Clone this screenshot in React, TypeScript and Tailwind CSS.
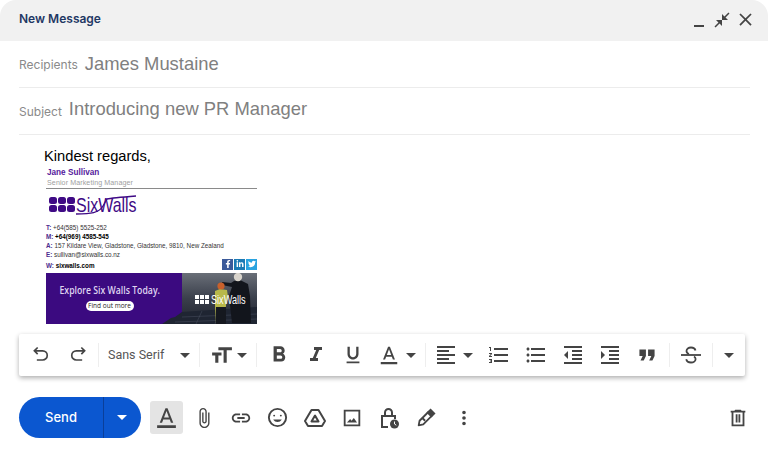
import React from 'react';
import { FaFacebookF, FaLinkedinIn, FaTwitter } from 'react-icons/fa';

const paths = {
  bold: 'M15.6 10.79c.97-.67 1.65-1.77 1.65-2.79 0-2.26-1.75-4-4-4H7v14h7.04c2.09 0 3.71-1.7 3.71-3.79 0-1.52-.86-2.82-2.15-3.42zM10 6.5h3c.83 0 1.5.67 1.5 1.5s-.67 1.5-1.5 1.5h-3v-3zm3.5 9H10v-3h3.5c.83 0 1.5.67 1.5 1.5s-.67 1.5-1.5 1.5z',
  italic: 'M10 4v3h2.21l-3.42 8H6v3h8v-3h-2.21l3.42-8H18V4z',
  underline: 'M12 17c3.31 0 6-2.69 6-6V3h-2.5v8c0 1.93-1.57 3.5-3.5 3.5S8.5 12.93 8.5 11V3H6v8c0 3.31 2.69 6 6 6zm-7 2v2h14v-2H5z',
  color: 'M11 3L5.5 17h2.25l1.12-3h6.25l1.12 3h2.25L13 3h-2zm-1.38 9L12 5.67 14.38 12H9.62zM3 19.5h18V22H3z',
  size: 'M9 4v3h5v12h3V7h5V4H9zm-6 8h3v7h3v-7h3V9H3v3z',
  align: 'M15 15H3v2h12v-2zm0-8H3v2h12V7zM3 13h18v-2H3v2zm0 8h18v-2H3v2zM3 3v2h18V3H3z',
  numbered: 'M2 17h2v.5H3v1h1v.5H2v1h3v-4H2v1zm1-9h1V4H2v1h1v3zm-1 3h1.8L2 13.1v.9h3v-1H3.2L5 10.9V10H2v1zm5-6v2h14V5H7zm0 14h14v-2H7v2zm0-6h14v-2H7v2z',
  bullets: 'M4 10.5c-.83 0-1.5.67-1.5 1.5s.67 1.5 1.5 1.5 1.5-.67 1.5-1.5-.67-1.5-1.5-1.5zm0-6c-.83 0-1.5.67-1.5 1.5S3.17 7.5 4 7.5 5.5 6.83 5.5 6 4.83 4.5 4 4.5zm0 12c-.83 0-1.5.68-1.5 1.5s.68 1.5 1.5 1.5 1.5-.68 1.5-1.5-.67-1.5-1.5-1.5zM7 19h14v-2H7v2zm0-6h14v-2H7v2zm0-8v2h14V5H7z',
  outdent: 'M11 17h10v-2H11v2zm-8-5l4 4V8l-4 4zm0 9h18v-2H3v2zM3 3v2h18V3H3zm8 6h10V7H11v2zm0 4h10v-2H11v2z',
  indent: 'M3 21h18v-2H3v2zM3 8v8l4-4-4-4zm8 9h10v-2H11v2zM3 3v2h18V3H3zm8 6h10V7H11v2zm0 4h10v-2H11v2z',
  quote: 'M6 17h3l2-4V7H5v6h3zm8 0h3l2-4V7h-6v6h3z',
  clip: 'M16.5 6v11.5c0 2.21-1.79 4-4 4s-4-1.79-4-4V5c0-1.38 1.12-2.5 2.5-2.5s2.5 1.12 2.5 2.5v10.5c0 .55-.45 1-1 1s-1-.45-1-1V6H10v9.5c0 1.38 1.12 2.5 2.5 2.5s2.5-1.12 2.5-2.5V5c0-2.21-1.79-4-4-4S7 2.79 7 5v12.5c0 3.04 2.46 5.5 5.5 5.5s5.5-2.46 5.5-5.5V6h-1.5z',
  link: 'M3.9 12c0-1.71 1.39-3.1 3.1-3.1h4V7H7c-2.76 0-5 2.24-5 5s2.24 5 5 5h4v-1.9H7c-1.71 0-3.1-1.39-3.1-3.1zM8 13h8v-2H8v2zm9-6h-4v1.9h4c1.71 0 3.1 1.39 3.1 3.1s-1.39 3.1-3.1 3.1h-4V17h4c2.76 0 5-2.24 5-5s-2.24-5-5-5z',
  close: 'M19 6.41L17.59 5 12 10.59 6.41 5 5 6.41 10.59 12 5 17.59 6.41 19 12 13.41 17.59 19 19 17.59 13.41 12z',
  collapse: 'M22 3.41l-5.29 5.29L20 12h-8V4l3.29 3.29L20.59 2 22 3.41zM3.41 22l5.29-5.29L12 20v-8H4l3.29 3.29L2 20.59 3.41 22z',
  image: 'M19 5v14H5V5h14m2-2H3v18h18V3zM6.5 17h11l-3.5-5-2.5 3-1.5-2z',
  more: 'M12 8a2 2 0 1 0 0-4 2 2 0 0 0 0 4zm0 2a2 2 0 1 0 0 4 2 2 0 0 0 0-4zm0 6a2 2 0 1 0 0 4 2 2 0 0 0 0-4z',
  trash: 'M15 3H9l-1 1H4v2h1v15h14V6h1V4h-4l-1-1zM7 6h10v13H7V6zm2.5 2v9h2V8h-2zm3 0v9h2V8h-2z',
};

const Icon = ({ d, size = 24 }: { d: string; size?: number }) => (
  <svg width={size} height={size} viewBox="0 0 24 24" fill="currentColor">
    <path d={d} />
  </svg>
);

const Line = ({ size = 24, children }: { size?: number; children: React.ReactNode }) => (
  <svg width={size} height={size} viewBox="0 0 24 24" fill="none" stroke="currentColor" strokeWidth="2">
    {children}
  </svg>
);

const Caret = () => (
  <div className="w-[10px] flex justify-center">
    <div className="w-0 h-0 border-x-[5px] border-x-transparent border-t-[5px] border-t-[#444]" />
  </div>
);

const Divider = ({ className }: { className: string }) => (
  <div className={`w-px h-[24px] bg-[#eeeeee] ${className}`} />
);

const Tool = ({ children, className = 'w-[37px]' }: { children: React.ReactNode; className?: string }) => (
  <div className={`${className} flex justify-center items-center text-[#444]`}>{children}</div>
);

const Field = ({ label, value, gap, valueClass = '' }: { label: string; value: string; gap: string; valueClass?: string }) => (
  <div className={`h-[47px] mx-[19px] w-[731px] border-b border-[#ececec] flex items-center ${gap}`}>
    <span className="text-[12px] text-[#8a8a8a] mt-[2px] font-['Inter',sans-serif]">{label}</span>
    <span className={`text-[18.4px] text-[#808080] font-['Liberation_Sans',sans-serif] ${valueClass}`}>{value}</span>
  </div>
);

const Contact = ({ k, v, bold, className = '' }: { k: string; v: string; bold?: boolean; className?: string }) => (
  <div className={`h-[9px] leading-[9px] text-[6.3px] text-[#333] ${className}`}>
    <b className="text-[#4b2a8c]">{k}</b> <span className={bold ? 'font-bold text-black' : ''}>{v}</span>
  </div>
);

const Dots = ({ dot, gap, className }: { dot: string; gap: string; className: string }) => (
  <div className={`grid grid-cols-3 ${gap}`}>
    {[0, 1, 2, 3, 4, 5].map((i) => (
      <div key={i} className={`${dot} ${className}`} />
    ))}
  </div>
);

const Signature = () => (
  <div className="ml-[46px] w-[211px] font-['Liberation_Sans',sans-serif]">
    <div className="text-[8.2px] leading-[10px] font-bold text-[#55209c] mt-[3px] pl-px">Jane Sullivan</div>
    <div className="text-[7.1px] leading-[10px] text-[#a0a0a0] tracking-[0.1px] pl-px">Senior Marketing Manager</div>
    <div className="h-px bg-[#8a8a8a]" />
    <div className="relative h-[29px] flex items-center gap-[1px] pl-[3px] pt-[2px]">
      <Dots dot="w-[8px] h-[7px] rounded-[2.5px]" gap="gap-[1px]" className="bg-[#3f0a85]" />
      <div className="text-[21px] leading-[21px] text-[#3f0a85] origin-left scale-x-[0.76] w-[60px] whitespace-nowrap">SixWalls</div>
      <svg className="absolute left-[27px] top-[2px]" width="64" height="26" viewBox="0 0 64 26" fill="none">
        <path d="M3 23C18 23 26 22 30 15L34 8C38 7 50 6 63 5" stroke="#3f0a85" strokeWidth="1.3" />
      </svg>
    </div>
    <div className="mt-[5px]">
      <Contact k="T:" v="+64(585) 5525-252" />
      <Contact k="M:" v="+64(969) 4585-545" bold />
      <Contact k="A:" v="157 Kildare View, Gladstone, Gladstone, 9810, New Zealand" />
      <Contact k="E:" v="sullivan@sixwalls.co.nz" />
    </div>
    <div className="flex items-center justify-between h-[12px] mt-[1px]">
      <Contact k="W:" v="sixwalls.com" bold className="-mt-[1px]" />
      <div className="flex gap-px mb-[4px]">
        <div className="w-[11px] h-[11px] bg-[#3b5a9a] text-white flex items-center justify-center text-[8px]"><FaFacebookF /></div>
        <div className="w-[11px] h-[11px] bg-[#1b7ab5] text-white flex items-center justify-center text-[8px]"><FaLinkedinIn /></div>
        <div className="w-[11px] h-[11px] bg-[#2aa3e0] text-white flex items-center justify-center text-[8px]"><FaTwitter /></div>
      </div>
    </div>
    <div className="h-[51px] mt-[1px] flex">
      <div className="w-[136px] bg-[#3b0a80] flex flex-col items-center pt-[10px] pr-[9px] font-['Open_Sans',sans-serif]">
        <div className="text-[10px] leading-[14px] text-[#dfd4f0] font-semibold origin-center scale-x-[0.87] whitespace-nowrap">Explore Six Walls Today.</div>
        <div className="mt-[4px] h-[10px] w-[48px] rounded-full bg-white text-[#222] text-[6.5px] leading-[10px] text-center">Find out more</div>
      </div>
      <div className="relative flex-1 bg-gradient-to-b from-[#6a6f78] via-[#3a3f4b] to-[#20242e]">
        <svg className="absolute left-[-20px] top-0" width="95" height="51" viewBox="0 0 95 51">
          <path d="M0 51l9-6 4-1 7-5 75-5v17z" fill="#1f2532" />
          <path d="M20 44l75-3M13 49l82-3M40 38l-6 13M58 37l-5 14" stroke="#4a5160" strokeWidth=".5" fill="none" />
          <path d="M53 18l5-2 7 1 1 7-2 8-1 19H54l-1-19z" fill="#b8b84a" />
          <path d="M54 34h10v17H54z" fill="#15181f" />
          <path d="M60 9l9 1 3-2 6-1 8 4 2 12 1 27H70l-3-27 3-9-10-2z" fill="#12151c" />
          <circle cx="76" cy="4" r="4.2" fill="#d9d4cc" />
          <circle cx="59" cy="13" r="3.6" fill="#c9602b" />
        </svg>
        <div className="absolute left-[13px] top-[20px] flex items-center gap-[2px]">
          <Dots dot="w-[4px] h-[4px]" gap="gap-px" className="bg-white" />
          <div className="text-[13px] leading-[13px] text-white origin-left scale-x-[0.7] w-[30px] whitespace-nowrap">SixWalls</div>
        </div>
      </div>
    </div>
  </div>
);

const Toolbar = () => (
  <div className="mx-[19px] w-[726px] h-[42px] bg-white rounded-[2px] shadow-[0_2px_5px_rgba(0,0,0,0.32)] flex items-center pl-[3px]">
    <Tool>
      <Line size={20}>
        <path d="M8 3L4 7l4 4M4 7h10a5.5 5.5 0 0 1 0 11H7" />
      </Line>
    </Tool>
    <Tool>
      <Line size={20}>
        <path d="M16 3l4 4-4 4M20 7H10a5.5 5.5 0 0 0 0 11h7" />
      </Line>
    </Tool>
    <Divider className="ml-[2px]" />
    <div className="ml-[9px] w-[58px] text-[12.5px] text-[#555] font-['Roboto',sans-serif] whitespace-nowrap">Sans Serif</div>
    <div className="ml-[14px]"><Caret /></div>
    <Divider className="ml-[9px]" />
    <Tool className="ml-[5px] w-[32px]"><Icon d={paths.size} size={25} /></Tool>
    <Caret />
    <Divider className="ml-[9px]" />
    <Tool className="ml-[3px] w-[37px]"><Icon d={paths.bold} size={26} /></Tool>
    <Tool><Icon d={paths.italic} size={24} /></Tool>
    <Tool><Icon d={paths.underline} size={22} /></Tool>
    <Tool className="w-[35px]"><Icon d={paths.color} size={22} /></Tool>
    <Caret />
    <Divider className="ml-[9px]" />
    <Tool className="ml-[3px] w-[34px]"><Icon d={paths.align} /></Tool>
    <Caret />
    <Tool className="ml-[7px] w-[37px]"><Icon d={paths.numbered} /></Tool>
    <Tool><Icon d={paths.bullets} /></Tool>
    <Tool><Icon d={paths.outdent} /></Tool>
    <Tool><Icon d={paths.indent} /></Tool>
    <Tool><Icon d={paths.quote} size={26} /></Tool>
    <Divider className="ml-[4px]" />
    <Tool className="ml-[2px] w-[37px]">
      <Line size={24}>
        <path d="M16.5 7.5C16 5.5 14.2 4.5 12 4.5 9.5 4.5 7.5 6 7.5 8c0 1.5 1 2.5 2.5 3" strokeWidth="1.8" />
        <path d="M15 13.5c1 .6 1.6 1.4 1.6 2.5 0 2-2 3.5-4.6 3.5-2.400 0-4.300-1.200-4.800-3.200" strokeWidth="1.800" />
        <path d="M2 12h20" strokeWidth="1.800" />
      </Line>
    </Tool>
    <Divider className="ml-[3px]" />
    <div className="ml-[11px]"><Caret /></div>
  </div>
);

const ActionBar = () => (
  <div className="mt-[21px] mx-[19px] h-[41px] w-[731px] flex items-center">
    <div className="w-[122px] h-[41px] rounded-full bg-[#0b57d0] flex text-white">
      <div className="w-[84px] flex items-center justify-center text-[13px] font-medium font-['Inter',sans-serif]">Send</div>
      <div className="w-px bg-[#0a3f9a]" />
      <div className="flex-1 flex items-center justify-center pr-[2px]">
        <div className="w-0 h-0 border-x-[5px] border-x-transparent border-t-[5px] border-t-white" />
      </div>
    </div>
    <div className="ml-[9px] w-[33px] h-[33px] rounded-[3px] bg-[#e4e4e4] flex items-center justify-center text-[#444]">
      <Icon d={paths.color} size={25} />
    </div>
    <Tool className="ml-[2px] w-[37px]"><Icon d={paths.clip} size={22} /></Tool>
    <Tool><Icon d={paths.link} size={22} /></Tool>
    <Tool>
      <Line size={23}>
        <circle cx="12" cy="12" r="9" />
        <circle cx="8.500" cy="10" r="1" fill="currentColor" stroke="none" />
        <circle cx="15.500" cy="10" r="1" fill="currentColor" stroke="none" />
        <path d="M7.500 14c2 3.500 7 3.500 9 0z" fill="currentColor" stroke="none" />
      </Line>
    </Tool>
    <Tool>
      <Line size={24}>
        <path d="M8.500 4h7L22 15l-3 5H5l-3-5z" strokeLinejoin="round" />
        <path d="M12 9.500L8.500 15.500h7z" strokeLinejoin="round" />
      </Line>
    </Tool>
    <Tool><Icon d={paths.image} size={22} /></Tool>
    <Tool>
      <svg width="24" height="24" viewBox="0 0 24 24" fill="none" stroke="currentColor" strokeWidth="2">
        <path d="M11 21H5V10h13v3" />
        <path d="M8 10V6.500a3.500 3.500 0 0 1 7 0V10" />
        <circle cx="17.500" cy="18" r="4.500" fill="currentColor" stroke="none" />
        <path d="M17.500 15.500V18l1.800 1.200" stroke="#fff" strokeWidth="1" />
      </svg>
    </Tool>
    <Tool>
      <svg width="22" height="22" viewBox="0 0 24 24" fill="none" stroke="currentColor" strokeWidth="2">
        <path d="M4 20l1-5 9-9 4 4-9 9z" strokeLinejoin="round" />
        <path d="M14 6l3-3 4 4-3 3z" fill="currentColor" />
        <path d="M8 12l3 3" />
      </svg>
    </Tool>
    <Tool className="ml-px w-[37px]"><Icon d={paths.more} size={22} /></Tool>
    <Tool className="ml-auto w-[37px] mr-[-6px]"><Icon d={paths.trash} size={22} /></Tool>
  </div>
);

export default function App() {
  return (
    <div className="w-[768px] h-[450px] bg-white overflow-hidden">
      <div className="h-[41px] bg-[#f1f1f1] rounded-t-[16px] flex items-center justify-between pl-[19px] pr-[11px]">
        <span className="text-[12px] font-semibold text-[#1f3864] font-['Inter',sans-serif] mb-[4px]">New Message</span>
        <div className="flex items-center text-[#444] mb-[2px]">
          <Tool className="w-[22px] pt-[12px]">
            <div className="w-[10px] h-[2px] bg-[#444]" />
          </Tool>
          <Tool className="w-[23px]"><Icon d={paths.collapse} size={18} /></Tool>
          <Tool className="w-[24px]"><Icon d={paths.close} size={21} /></Tool>
        </div>
      </div>
      <Field label="Recipients" value="James Mustaine" gap="gap-[7px]" valueClass="-mt-[1px]" />
      <Field label="Subject" value="Introducing new PR Manager" gap="gap-[7px]" valueClass="-mt-[4px]" />
      <div className="h-[199px] pt-[12px]">
        <div className="ml-[44px] text-[14.7px] leading-[18px] text-black font-['Liberation_Sans',sans-serif]">Kindest regards,</div>
        <Signature />
      </div>
      <Toolbar />
      <ActionBar />
    </div>
  );
}
